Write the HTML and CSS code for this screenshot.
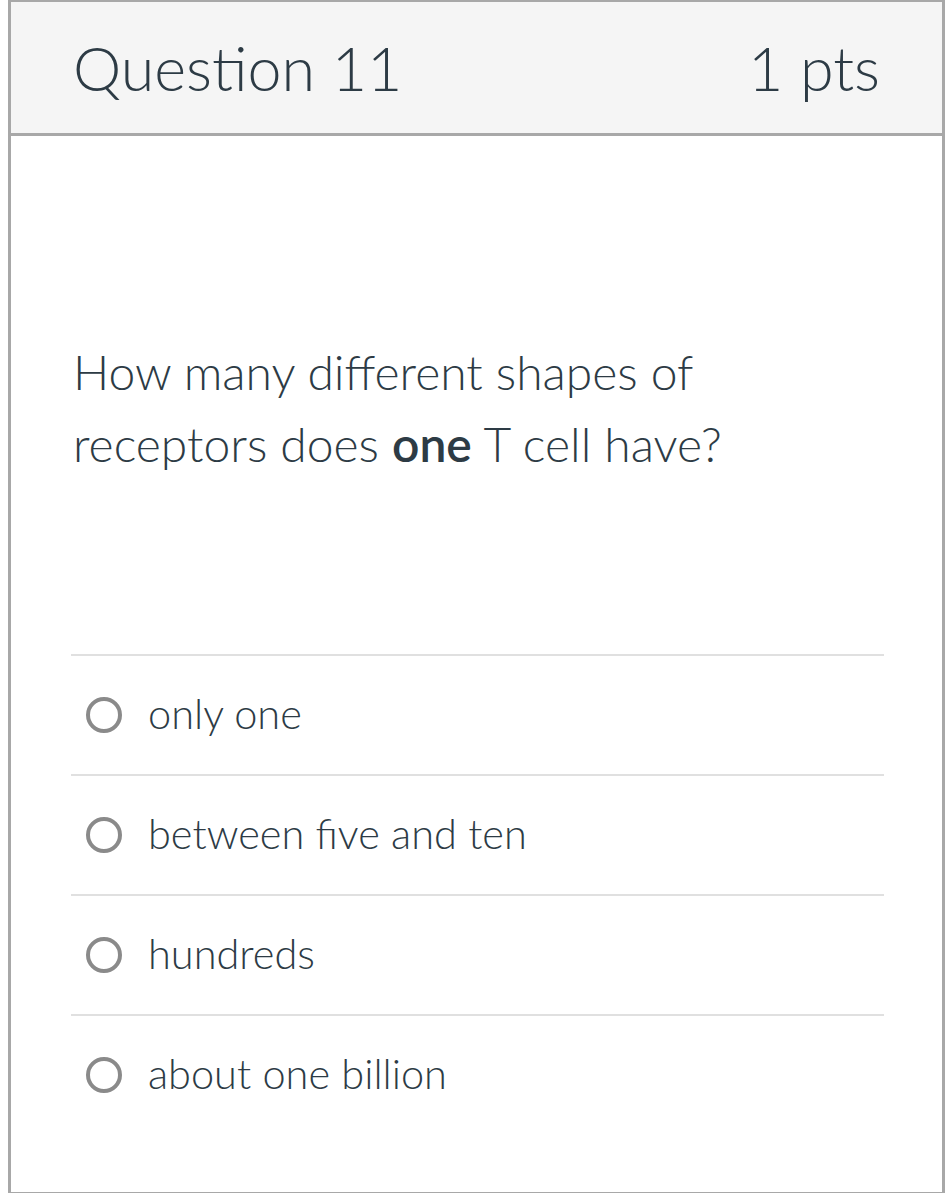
FILE: index.html
```html
<!DOCTYPE html>
<html>
<head>
<meta charset="utf-8">
<link rel="stylesheet" href="styles.css">
</head>
<body>
<div class="card">
  <div class="header">
    <span class="title">Question 11</span>
    <span class="pts">1 pts</span>
  </div>
  <div class="content">
    <div class="question">How many different shapes of receptors does <strong>one</strong> T cell have?</div>
    <div class="answers">
      <div class="answer"><span class="radio"></span><span class="label">only one</span></div>
      <div class="answer"><span class="radio"></span><span class="label">between five and ten</span></div>
      <div class="answer"><span class="radio"></span><span class="label">hundreds</span></div>
      <div class="answer"><span class="radio"></span><span class="label">about one billion</span></div>
    </div>
  </div>
</div>
</body>
</html>
```

FILE: styles.css
```css
html, body {
  margin: 0;
  padding: 0;
  background: #ffffff;
}
body {
  padding-left: 8px;
  font-family: Lato, "Open Sans", sans-serif;
  color: #2d3b45;
}
.card {
  box-sizing: border-box;
  width: 937px;
  height: 1193px;
  border-top: 2px solid #a8a8a8;
  border-left: 3px solid #a8a8a8;
  border-right: 3px solid #a8a8a8;
  border-bottom: 1px solid #a8a8a8;
  background: #fff;
}
.header {
  box-sizing: border-box;
  height: 134px;
  background: #f5f5f5;
  border-bottom: 3px solid #a8a8a8;
  display: flex;
  justify-content: space-between;
  align-items: center;
  padding: 0 62px 0 62px;
}
.title, .pts {
  font-size: 61px;
  font-weight: 300;
  line-height: 1;
}
.content {
  padding: 0 58px 0 62px;
}
.question {
  max-width: 720px;
  font-size: 48px;
  line-height: 72px;
  padding-top: 200px;
  padding-bottom: 174px;
  font-weight: 300;
}
.question strong {
  font-weight: 600;
}
.answers {
  margin-left: -2px;
}
.answer {
  display: flex;
  align-items: center;
  height: 118px;
  border-top: 2px solid #e0e0e0;
  font-size: 41.5px;
  font-weight: 300;
}
.label {
  position: relative;
  top: -2px;
}
.radio {
  box-sizing: border-box;
  width: 36px;
  height: 36px;
  border: 4px solid #8a8a8a;
  border-radius: 50%;
  margin-left: 15px;
  margin-right: 26px;
  flex: none;
}
```
